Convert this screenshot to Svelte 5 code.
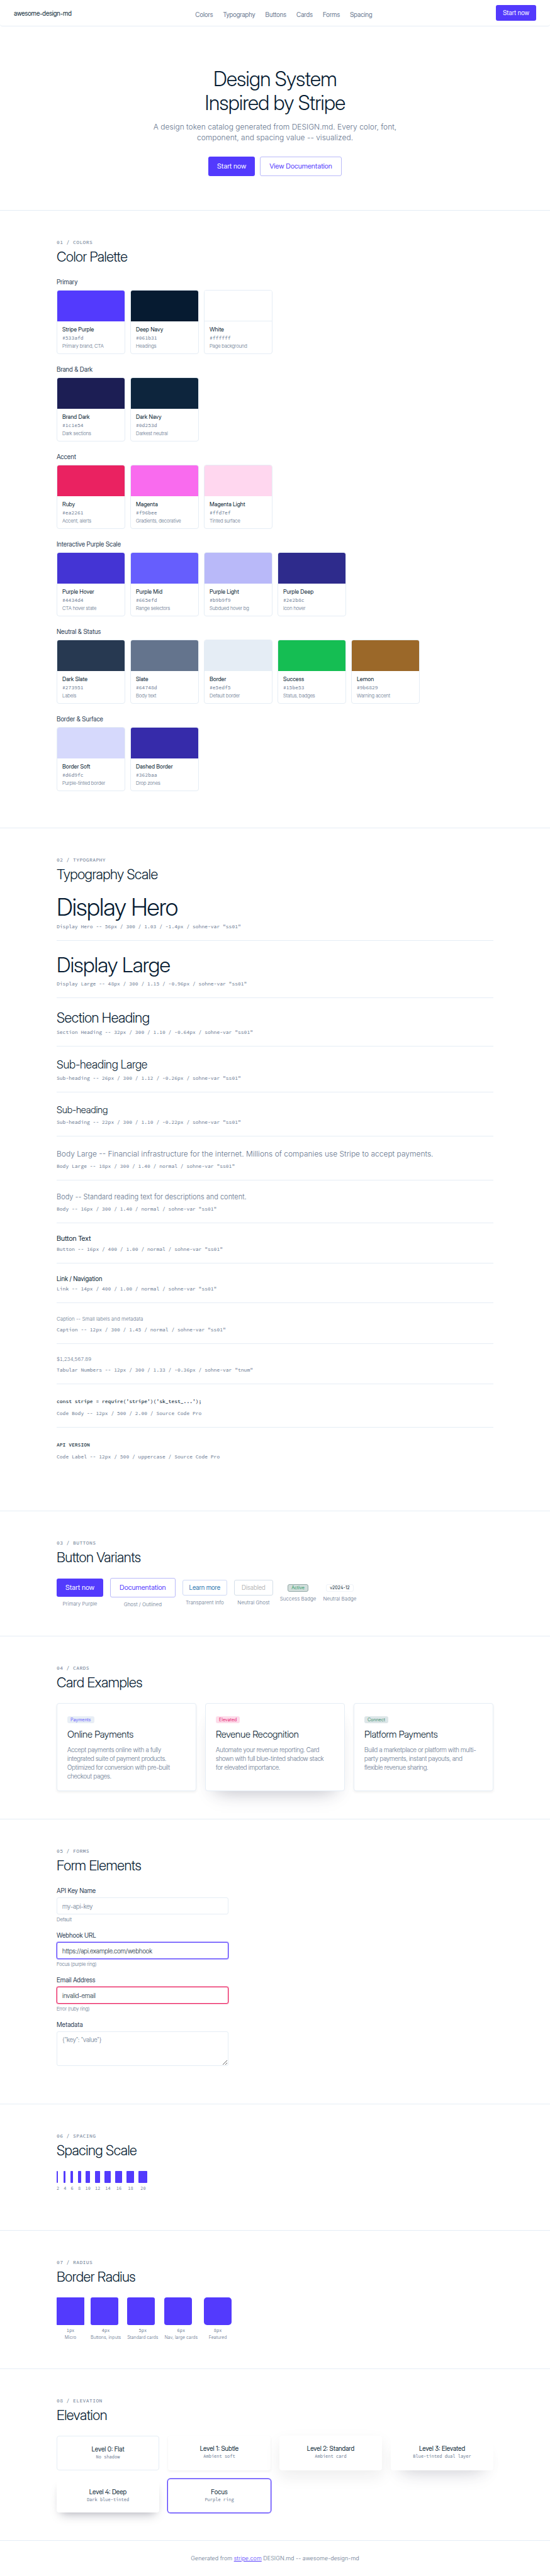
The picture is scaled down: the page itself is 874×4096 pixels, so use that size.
<script>
  const links = ["Colors", "Typography", "Buttons", "Cards", "Forms", "Spacing"]

  const palette = [
    {
      title: "Primary",
      colors: [
        { name: "Stripe Purple", hex: "#533afd", role: "Primary brand, CTA" },
        { name: "Deep Navy", hex: "#061b31", role: "Headings" },
        { name: "White", hex: "#ffffff", role: "Page background" },
      ],
    },
    {
      title: "Brand & Dark",
      colors: [
        { name: "Brand Dark", hex: "#1c1e54", role: "Dark sections" },
        { name: "Dark Navy", hex: "#0d253d", role: "Darkest neutral" },
      ],
    },
    {
      title: "Accent",
      colors: [
        { name: "Ruby", hex: "#ea2261", role: "Accent, alerts" },
        { name: "Magenta", hex: "#f96bee", role: "Gradients, decorative" },
        { name: "Magenta Light", hex: "#ffd7ef", role: "Tinted surface" },
      ],
    },
    {
      title: "Interactive Purple Scale",
      colors: [
        { name: "Purple Hover", hex: "#4434d4", role: "CTA hover state" },
        { name: "Purple Mid", hex: "#665efd", role: "Range selectors" },
        { name: "Purple Light", hex: "#b9b9f9", role: "Subdued hover bg" },
        { name: "Purple Deep", hex: "#2e2b8c", role: "Icon hover" },
      ],
    },
    {
      title: "Neutral & Status",
      colors: [
        { name: "Dark Slate", hex: "#273951", role: "Labels" },
        { name: "Slate", hex: "#64748d", role: "Body text" },
        { name: "Border", hex: "#e5edf5", role: "Default border" },
        { name: "Success", hex: "#15be53", role: "Status, badges" },
        { name: "Lemon", hex: "#9b6829", role: "Warning accent" },
      ],
    },
    {
      title: "Border & Surface",
      colors: [
        { name: "Border Soft", hex: "#d6d9fc", role: "Purple-tinted border" },
        { name: "Dashed Border", hex: "#362baa", role: "Drop zones" },
      ],
    },
  ]

  const type = [
    { style: "display-hero", text: "Display Hero", spec: 'Display Hero -- 56px / 300 / 1.03 / -1.4px / sohne-var "ss01"' },
    { style: "display-large", text: "Display Large", spec: 'Display Large -- 48px / 300 / 1.15 / -0.96px / sohne-var "ss01"' },
    { style: "heading", text: "Section Heading", spec: 'Section Heading -- 32px / 300 / 1.10 / -0.64px / sohne-var "ss01"' },
    { style: "sub-large", text: "Sub-heading Large", spec: 'Sub-heading -- 26px / 300 / 1.12 / -0.26px / sohne-var "ss01"' },
    { style: "sub", text: "Sub-heading", spec: 'Sub-heading -- 22px / 300 / 1.10 / -0.22px / sohne-var "ss01"' },
    {
      style: "body-large",
      text: "Body Large -- Financial infrastructure for the internet. Millions of companies use Stripe to accept payments.",
      spec: 'Body Large -- 18px / 300 / 1.40 / normal / sohne-var "ss01"',
    },
    {
      style: "body",
      text: "Body -- Standard reading text for descriptions and content.",
      spec: 'Body -- 16px / 300 / 1.40 / normal / sohne-var "ss01"',
    },
    { style: "button", text: "Button Text", spec: 'Button -- 16px / 400 / 1.00 / normal / sohne-var "ss01"' },
    { style: "link", text: "Link / Navigation", spec: 'Link -- 14px / 400 / 1.00 / normal / sohne-var "ss01"' },
    { style: "caption", text: "Caption -- Small labels and metadata", spec: 'Caption -- 12px / 300 / 1.45 / normal / sohne-var "ss01"' },
    { style: "tabular", text: "$1,234,567.89", spec: 'Tabular Numbers -- 12px / 300 / 1.33 / -0.36px / sohne-var "tnum"' },
    { style: "code", text: "const stripe = require('stripe')('sk_test_...');", spec: "Code Body -- 12px / 500 / 2.00 / Source Code Pro" },
    { style: "code upper", text: "API Version", spec: "Code Label -- 12px / 500 / uppercase / Source Code Pro" },
  ]

  const cards = [
    {
      tag: "Payments",
      tone: "purple",
      title: "Online Payments",
      text: "Accept payments online with a fully integrated suite of payment products. Optimized for conversion with pre-built checkout pages.",
    },
    {
      tag: "Elevated",
      tone: "ruby",
      title: "Revenue Recognition",
      text: "Automate your revenue reporting. Card shown with full blue-tinted shadow stack for elevated importance.",
      elevated: true,
    },
    {
      tag: "Connect",
      tone: "green",
      title: "Platform Payments",
      text: "Build a marketplace or platform with multi-party payments, instant payouts, and flexible revenue sharing.",
    },
  ]

  const spacing = [
    { label: 2, width: 2 },
    { label: 4, width: 3 },
    { label: 6, width: 4 },
    { label: 8, width: 5 },
    { label: 10, width: 7 },
    { label: 12, width: 8 },
    { label: 14, width: 10 },
    { label: 16, width: 11 },
    { label: 18, width: 12 },
    { label: 20, width: 14 },
  ]

  const radii = [
    { label: "1px", radius: 1, use: "Micro" },
    { label: "4px", radius: 3, use: "Buttons, inputs" },
    { label: "5px", radius: 3, use: "Standard cards" },
    { label: "6px", radius: 4, use: "Nav, large cards" },
    { label: "8px", radius: 5, use: "Featured" },
  ]

  const levels = [
    { style: "flat", title: "Level 0: Flat", note: "No shadow" },
    { style: "subtle", title: "Level 1: Subtle", note: "Ambient soft" },
    { style: "standard", title: "Level 2: Standard", note: "Ambient card" },
    { style: "raised", title: "Level 3: Elevated", note: "Blue-tinted dual layer" },
    { style: "deep", title: "Level 4: Deep", note: "Dark blue-tinted" },
    { style: "focus", title: "Focus", note: "Purple ring" },
  ]

  let apiKey = ""
  let webhook = "https://api.example.com/webhook"
  let email = "invalid-email"
  let metadata = ""
</script>

<nav class="nav">
  <a class="brand" href="#top">awesome-design-md</a>
  <ul>
    {#each links as link}
      <li><a href="#{link.toLowerCase()}">{link}</a></li>
    {/each}
  </ul>
  <button class="btn small primary">Start now</button>
</nav>

<header class="hero" id="top">
  <h1>Design System<br />Inspired by Stripe</h1>
  <p>
    A design token catalog generated from DESIGN.md. Every color, font,
    component, and spacing value -- visualized.
  </p>
  <div class="actions">
    <button class="btn primary">Start now</button>
    <button class="btn ghost">View Documentation</button>
  </div>
</header>

<main>
  <section id="colors">
    <div class="inner">
      <div class="number">01 / Colors</div>
      <h2>Color Palette</h2>
      {#each palette as group}
        <div class="group">
          <h3>{group.title}</h3>
          <div class="swatches">
            {#each group.colors as color}
              <div class="swatch">
                <div class="fill" class:lined={color.name === "White"} style="background: {color.hex}"></div>
                <div class="info">
                  <div class="name">{color.name}</div>
                  <div class="hex">{color.hex}</div>
                  <div class="role">{color.role}</div>
                </div>
              </div>
            {/each}
          </div>
        </div>
      {/each}
    </div>
  </section>

  <section id="typography">
    <div class="inner">
      <div class="number">02 / Typography</div>
      <h2>Typography Scale</h2>
      {#each type as sample}
        <div class="sample">
          <div class="type {sample.style}">{sample.text}</div>
          <div class="spec">{sample.spec}</div>
        </div>
      {/each}
    </div>
  </section>

  <section id="buttons">
    <div class="inner">
      <div class="number">03 / Buttons</div>
      <h2>Button Variants</h2>
      <div class="variants">
        <div class="variant">
          <button class="btn primary">Start now</button>
          <span>Primary Purple</span>
        </div>
        <div class="variant">
          <button class="btn ghost">Documentation</button>
          <span>Ghost / Outlined</span>
        </div>
        <div class="variant">
          <button class="btn small outline">Learn more</button>
          <span>Transparent Info</span>
        </div>
        <div class="variant">
          <button class="btn small neutral" disabled>Disabled</button>
          <span>Neutral Ghost</span>
        </div>
        <div class="variant">
          <div class="badge success">Active</div>
          <span>Success Badge</span>
        </div>
        <div class="variant">
          <div class="badge version">v2024-12</div>
          <span>Neutral Badge</span>
        </div>
      </div>
    </div>
  </section>

  <section id="cards">
    <div class="inner">
      <div class="number">04 / Cards</div>
      <h2>Card Examples</h2>
      <div class="cards">
        {#each cards as card}
          <article class="card" class:elevated={card.elevated}>
            <div class="tag {card.tone}">{card.tag}</div>
            <h3>{card.title}</h3>
            <p>{card.text}</p>
          </article>
        {/each}
      </div>
    </div>
  </section>

  <section id="forms">
    <div class="inner">
      <div class="number">05 / Forms</div>
      <h2>Form Elements</h2>
      <form>
        <div class="field">
          <label for="api-key">API Key Name</label>
          <input id="api-key" type="text" placeholder="my-api-key" bind:value={apiKey} />
          <small>Default</small>
        </div>
        <div class="field">
          <label for="webhook">Webhook URL</label>
          <input id="webhook" class="focused" type="text" bind:value={webhook} />
          <small>Focus (purple ring)</small>
        </div>
        <div class="field">
          <label for="email">Email Address</label>
          <input id="email" class="error" type="text" bind:value={email} />
          <small>Error (ruby ring)</small>
        </div>
        <div class="field">
          <label for="metadata">Metadata</label>
          <textarea id="metadata" placeholder={'{"key": "value"}'} bind:value={metadata}></textarea>
        </div>
      </form>
    </div>
  </section>

  <section id="spacing">
    <div class="inner">
      <div class="number">06 / Spacing</div>
      <h2>Spacing Scale</h2>
      <div class="bars">
        {#each spacing as step}
          <div class="step">
            <div class="bar" style="width: {step.width}px"></div>
            <div class="value">{step.label}</div>
          </div>
        {/each}
      </div>
    </div>
  </section>

  <section id="radius">
    <div class="inner">
      <div class="number">07 / Radius</div>
      <h2>Border Radius</h2>
      <div class="radii">
        {#each radii as item}
          <div class="step">
            <div class="box" style="border-radius: {item.radius}px"></div>
            <div class="value">{item.label}</div>
            <div class="use">{item.use}</div>
          </div>
        {/each}
      </div>
    </div>
  </section>

  <section id="elevation">
    <div class="inner">
      <div class="number">08 / Elevation</div>
      <h2>Elevation</h2>
      <div class="levels">
        {#each levels as level}
          <div class="level {level.style}">
            <div class="title">{level.title}</div>
            <div class="note">{level.note}</div>
          </div>
        {/each}
      </div>
    </div>
  </section>
</main>

<footer>
  Generated from <a href="#top">stripe.com</a> DESIGN.md -- awesome-design-md
</footer>

<style>
  :global(body) {
    --purple: #533afd;
    --navy: #061b31;
    --label: #273951;
    --slate: #64748d;
    --border: #e5edf5;
    --display: "Inter Display", Inter, "Liberation Sans", sans-serif;
    --text: Inter, "Liberation Sans", sans-serif;
    --mono: "Source Code Pro", "Liberation Mono", monospace;

    background: #fff;
    color: var(--navy);
    font-family: var(--display);
    font-weight: 300;
    font-feature-settings: "ss01";
  }

  h1,
  h2,
  h3,
  p,
  ul {
    margin: 0;
    padding: 0;
    font-weight: 300;
  }

  .nav {
    display: flex;
    align-items: center;
    justify-content: space-between;
    padding: 8px 22px;
    border-bottom: 1px solid var(--border);
    border-radius: 0 0 4px 4px;
  }
  .nav a {
    color: var(--slate);
    font-size: 10px;
    font-weight: 400;
    text-decoration: none;
  }
  .nav a.brand {
    color: var(--navy);
    letter-spacing: -0.01em;
  }
  .nav ul {
    display: flex;
    gap: 16px;
    list-style: none;
  }

  .btn {
    padding: 8px 14px;
    border: none;
    border-radius: 3px;
    background: transparent;
    font-family: var(--display);
    font-size: 11px;
    font-weight: 400;
    font-feature-settings: inherit;
    line-height: 13px;
  }
  .btn.small {
    padding: 7px 11px;
    font-size: 10px;
    line-height: 11px;
  }
  .btn.primary {
    background: var(--purple);
    color: #fff;
  }
  .btn.ghost {
    border: 1px solid #b9b9f9;
    color: var(--purple);
  }
  .btn.outline {
    padding: 6px 10px;
    border: 1px solid #d0daf6;
    color: #2874ad;
  }
  .btn.neutral {
    padding: 6px 11px;
    border: 1px solid #d4dee9;
    color: #b7b7b7;
  }

  .hero {
    display: flex;
    flex-direction: column;
    align-items: center;
    padding: 65px 22px 54px;
    border-bottom: 1px solid var(--border);
    text-align: center;
  }
  .hero h1 {
    font-size: 32px;
    line-height: 38px;
    letter-spacing: -0.02em;
  }
  .hero p {
    max-width: 400px;
    margin-top: 10px;
    color: var(--slate);
    font-family: var(--text);
    font-size: 12px;
    line-height: 17px;
  }
  .actions {
    display: flex;
    gap: 8px;
    margin-top: 22px;
  }

  section {
    border-bottom: 1px solid var(--border);
  }
  .inner {
    max-width: 694px;
    margin: 0 auto;
    padding: 44px 22px;
  }
  .number {
    color: var(--slate);
    font-family: var(--mono);
    font-size: 8px;
    font-weight: 400;
    line-height: 12px;
    letter-spacing: 0.05em;
    text-transform: uppercase;
  }
  h2 {
    margin: 5px 0 21px;
    font-size: 22px;
    line-height: 24px;
    letter-spacing: -0.02em;
  }

  .group {
    margin-bottom: 17px;
  }
  .group:last-child {
    margin-bottom: 14px;
  }
  .group h3 {
    margin-bottom: 6px;
    color: var(--label);
    font-size: 10px;
    font-weight: 400;
    line-height: 14px;
  }
  .swatches {
    display: grid;
    grid-template-columns: repeat(6, 1fr);
    gap: 8px;
  }
  .swatch {
    overflow: hidden;
    border: 1px solid var(--border);
    border-radius: 4px;
  }
  .fill {
    box-sizing: border-box;
    height: 49px;
  }
  .fill.lined {
    border-bottom: 1px solid var(--border);
  }
  .info {
    padding: 7px 8px 6px;
  }
  .name,
  .hex,
  .role {
    line-height: 12px;
    white-space: nowrap;
  }
  .name {
    font-size: 9px;
    font-weight: 400;
  }
  .hex {
    margin: 1px 0;
    color: var(--slate);
    font-family: var(--mono);
    font-size: 8px;
    font-weight: 400;
  }
  .role {
    color: var(--slate);
    font-size: 8px;
  }

  .sample {
    margin-bottom: 19px;
    padding-bottom: 16px;
    border-bottom: 1px solid var(--border);
  }
  .sample:last-child {
    border-bottom-color: transparent;
  }
  .spec {
    margin-top: 6px;
    color: var(--slate);
    font-family: var(--mono);
    font-size: 8px;
    font-weight: 400;
    line-height: 11px;
  }
  .display-hero {
    font-size: 38px;
    line-height: 39px;
    letter-spacing: -0.025em;
  }
  .display-large {
    font-size: 33px;
    line-height: 38px;
    letter-spacing: -0.02em;
  }
  .heading {
    font-size: 22px;
    line-height: 24px;
    letter-spacing: -0.02em;
  }
  .sub-large {
    font-size: 18px;
    line-height: 20px;
    letter-spacing: -0.01em;
  }
  .sub {
    font-size: 15px;
    line-height: 17px;
    letter-spacing: -0.01em;
  }
  .body-large {
    color: var(--slate);
    font-family: var(--text);
    font-size: 12px;
    line-height: 17px;
  }
  .body {
    color: var(--slate);
    font-family: var(--text);
    font-size: 11px;
    line-height: 15px;
  }
  .button {
    font-size: 11px;
    font-weight: 400;
    line-height: 11px;
  }
  .link {
    font-size: 10px;
    font-weight: 400;
    line-height: 10px;
  }
  .caption {
    color: var(--slate);
    font-family: var(--text);
    font-size: 8px;
    line-height: 12px;
  }
  .tabular {
    color: var(--slate);
    font-family: var(--text);
    font-size: 8px;
    font-feature-settings: "tnum";
    line-height: 11px;
    letter-spacing: -0.03em;
  }
  .code {
    font-family: var(--mono);
    font-size: 8px;
    font-weight: 500;
    line-height: 16px;
  }
  .upper {
    text-transform: uppercase;
  }

  .variants {
    display: flex;
    flex-wrap: wrap;
    align-items: center;
    gap: 11px;
  }
  .variant {
    display: flex;
    flex-direction: column;
    align-items: center;
    gap: 6px;
    color: var(--slate);
    font-family: var(--text);
    font-size: 8px;
    line-height: 11px;
  }
  .badge {
    padding: 0 5px;
    border: 1px solid transparent;
    border-radius: 3px;
    font-size: 7px;
    line-height: 10px;
    font-weight: 400;
  }
  .badge.success {
    border-color: #94a8a8;
    background: #d2dedb;
    color: #2a9a68;
  }
  .badge.version {
    border-color: #f0f4f9;
    color: var(--navy);
  }

  .cards {
    display: grid;
    grid-template-columns: repeat(3, 1fr);
    gap: 14px;
  }
  .card {
    padding: 20px 16px 16px;
    border: 1px solid var(--border);
    border-radius: 4px;
    background: #fff;
    box-shadow: 0 2px 4px rgba(23, 23, 23, 0.06);
  }
  .card.elevated {
    box-shadow:
      0 20px 31px -20px rgba(50, 50, 93, 0.25),
      0 12px 25px -12px rgba(0, 0, 0, 0.1);
  }
  .card h3 {
    margin: 9px 0 8px;
    font-size: 15px;
    line-height: 18px;
    letter-spacing: -0.01em;
  }
  .card p {
    padding-right: 6px;
    color: var(--slate);
    font-size: 10px;
    line-height: 14px;
  }
  .tag {
    width: fit-content;
    padding: 0 5px;
    border-radius: 3px;
    font-family: var(--text);
    font-size: 7px;
    font-weight: 400;
    line-height: 11px;
  }
  .tag.purple {
    background: #e8eef5;
    color: #665efd;
  }
  .tag.ruby {
    background: #fddcea;
    color: #e3176f;
  }
  .tag.green {
    background: #dde6e8;
    color: #3b8d6c;
  }

  form {
    display: flex;
    flex-direction: column;
    gap: 12px;
    max-width: 273px;
    padding-bottom: 16px;
  }
  .field {
    display: flex;
    flex-direction: column;
  }
  label {
    margin-bottom: 4px;
    color: var(--label);
    font-size: 10px;
    font-weight: 400;
    line-height: 14px;
  }
  input,
  textarea {
    box-sizing: border-box;
    height: 27px;
    margin: 0;
    padding: 6px 8px;
    border: 1px solid var(--border);
    border-radius: 3px;
    outline: none;
    background: #fff;
    color: var(--navy);
    font-family: inherit;
    font-size: 10px;
    font-weight: 300;
    line-height: 13px;
  }
  textarea {
    height: 55px;
    resize: vertical;
  }
  input::placeholder,
  textarea::placeholder {
    color: var(--slate);
  }
  input.focused {
    border-color: var(--purple);
    box-shadow: 0 0 0 1px rgba(83, 58, 253, 0.4);
  }
  input.error {
    border-color: #ea2261;
    box-shadow: 0 0 0 1px rgba(234, 34, 97, 0.4);
  }
  small {
    margin-top: 3px;
    color: var(--slate);
    font-size: 8px;
    line-height: 11px;
  }

  .bars,
  .radii {
    display: flex;
    flex-wrap: wrap;
    gap: 7px;
    text-align: center;
  }
  .bars {
    padding-bottom: 17px;
  }
  .radii {
    gap: 10px;
  }
  .bar {
    height: 19px;
    border-radius: 1px;
    background: var(--purple);
  }
  .box {
    width: 44px;
    height: 44px;
    background: var(--purple);
  }
  .value {
    margin-top: 4px;
    color: var(--slate);
    font-family: var(--mono);
    font-size: 7px;
    font-weight: 400;
    line-height: 10px;
  }
  .use {
    color: var(--slate);
    font-family: var(--text);
    font-size: 7px;
    line-height: 11px;
  }

  .levels {
    display: grid;
    grid-template-columns: repeat(4, 1fr);
    gap: 14px;
    text-align: center;
  }
  .level {
    padding: 14px;
    border-radius: 4px;
    background: #fff;
  }
  .level.flat {
    border: 1px solid var(--border);
  }
  .level.subtle {
    box-shadow: 0 2px 4px rgba(23, 23, 23, 0.06);
  }
  .level.standard {
    box-shadow: 0 10px 24px rgba(23, 23, 23, 0.08);
  }
  .level.raised {
    box-shadow:
      0 20px 31px -20px rgba(50, 50, 93, 0.25),
      0 12px 25px -12px rgba(0, 0, 0, 0.1);
  }
  .level.deep {
    box-shadow:
      0 10px 17px -7px rgba(3, 3, 39, 0.25),
      0 5px 10px -5px rgba(0, 0, 0, 0.1);
  }
  .level.focus {
    box-shadow:
      0 0 0 1px var(--purple),
      0 0 0 2px rgba(83, 58, 253, 0.4);
  }
  .title {
    font-size: 10px;
    font-weight: 400;
    line-height: 13px;
  }
  .note {
    color: var(--slate);
    font-family: var(--mono);
    font-size: 7px;
    font-weight: 400;
    line-height: 12px;
  }

  footer {
    padding: 22px 22px 20px;
    color: var(--slate);
    font-family: var(--text);
    font-size: 9px;
    line-height: 12px;
    text-align: center;
  }
  footer a {
    color: var(--purple);
  }
</style>
